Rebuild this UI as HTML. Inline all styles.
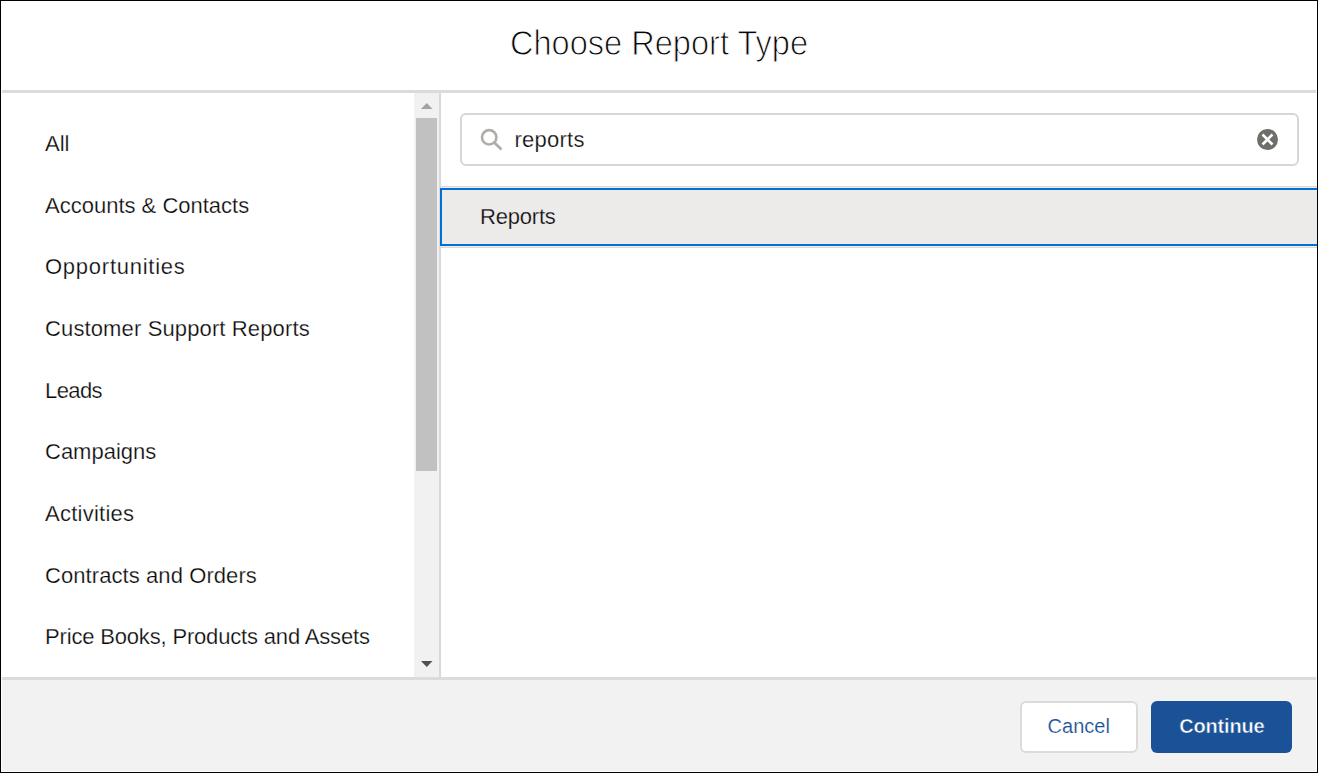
<!DOCTYPE html>
<html><head><meta charset="utf-8">
<style>
html,body{margin:0;padding:0;width:1318px;height:773px;overflow:hidden;background:#fff;}
body{position:relative;font-family:"Liberation Sans",sans-serif;color:#080707;}
.a{position:absolute;}
.t{position:absolute;white-space:nowrap;line-height:22px;font-size:22px;-webkit-text-stroke:0.25px #fff;}
</style></head><body>
<!-- frame -->
<div class="a" style="left:0;top:0;width:1318px;height:773px;box-sizing:border-box;border:1px solid #000;"></div>
<!-- header -->
<div class="t" style="left:510px;top:24.5px;font-size:35.5px;line-height:36px;color:#080707;-webkit-text-stroke:1px #fff;transform:scaleX(0.917);transform-origin:0 0;">Choose Report Type</div>
<div class="a" style="left:2px;top:90px;width:1314px;height:3px;background:#dddbda;"></div>
<!-- left list -->
<div class="t" style="left:45px;top:133px;">All</div>
<div class="t" style="left:45px;top:195px;">Accounts &amp; Contacts</div>
<div class="t" style="left:45px;top:256px;letter-spacing:0.75px;">Opportunities</div>
<div class="t" style="left:45px;top:318px;letter-spacing:0.13px;">Customer Support Reports</div>
<div class="t" style="left:45px;top:380px;letter-spacing:-0.6px;">Leads</div>
<div class="t" style="left:45px;top:441px;">Campaigns</div>
<div class="t" style="left:45px;top:503px;letter-spacing:0.25px;">Activities</div>
<div class="t" style="left:45px;top:565px;letter-spacing:0.08px;">Contracts and Orders</div>
<div class="t" style="left:45px;top:626px;letter-spacing:-0.17px;">Price Books, Products and Assets</div>
<!-- scrollbar -->
<div class="a" style="left:414px;top:93px;width:25px;height:584px;background:#f1f1f1;"></div>
<div class="a" style="left:416px;top:118px;width:21px;height:353px;background:#c1c1c1;"></div>
<svg class="a" style="left:414px;top:93px;" width="25" height="584">
<polygon points="7,16 18.5,16 12.75,10" fill="#a3a3a3"/>
<polygon points="7,568 18.5,568 12.75,574" fill="#505050"/>
</svg>
<div class="a" style="left:439px;top:93px;width:2px;height:584px;background:#d8d9dc;"></div>
<!-- search -->
<div class="a" style="left:460px;top:113px;width:839px;height:53px;box-sizing:border-box;border:2px solid #d8d6d4;border-radius:6px;background:#fff;"></div>
<svg class="a" style="left:470px;top:120px;" width="40" height="40">
<circle cx="19.2" cy="17.3" r="7.2" fill="none" stroke="#b0adab" stroke-width="2.6"/>
<line x1="24.5" y1="22.8" x2="31.5" y2="29.6" stroke="#b0adab" stroke-width="2.8"/>
</svg>
<div class="t" style="left:514.5px;top:129px;letter-spacing:0.25px;">reports</div>
<svg class="a" style="left:1247px;top:119px;" width="40" height="40">
<circle cx="20.5" cy="20.5" r="10.5" fill="#706e6b"/>
<line x1="15.5" y1="15.5" x2="25.5" y2="25.5" stroke="#fff" stroke-width="2.6"/>
<line x1="25.5" y1="15.5" x2="15.5" y2="25.5" stroke="#fff" stroke-width="2.6"/>
</svg>
<!-- selected row -->
<div class="a" style="left:441px;top:186px;width:876px;height:62px;box-sizing:border-box;border-top:1px solid #dddbda;border-bottom:1px solid #dddbda;background:#ecebea;"></div>
<div class="a" style="left:440px;top:188px;width:880px;height:58px;box-sizing:border-box;border:2px solid #0070d2;"></div>
<div class="t" style="left:480px;top:206px;letter-spacing:-0.2px;-webkit-text-stroke:0.25px #ecebea;">Reports</div>
<!-- footer -->
<div class="a" style="left:2px;top:677px;width:1314px;height:3px;background:#dddbda;"></div>
<div class="a" style="left:2px;top:680px;width:1314px;height:91px;background:#f3f2f2;"></div>
<div class="a" style="left:1020px;top:701px;width:118px;height:52px;box-sizing:border-box;border:2px solid #dddbda;border-radius:6px;background:#fff;"></div>
<div class="t" style="left:1047.6px;top:716px;font-size:20px;line-height:20px;color:#1b5297;-webkit-text-stroke:0.15px #fff;">Cancel</div>
<div class="a" style="left:1151px;top:701px;width:141px;height:52px;border-radius:6px;background:#1b5297;"></div>
<div class="t" style="left:1179.3px;top:716px;font-size:20px;line-height:20px;font-weight:bold;letter-spacing:-0.2px;color:#fff;-webkit-text-stroke:0.5px #1b5297;">Continue</div>
<!-- frame on top -->
<div class="a" style="left:0;top:0;width:1318px;height:773px;box-sizing:border-box;border:1px solid #000;"></div>
</body></html>
